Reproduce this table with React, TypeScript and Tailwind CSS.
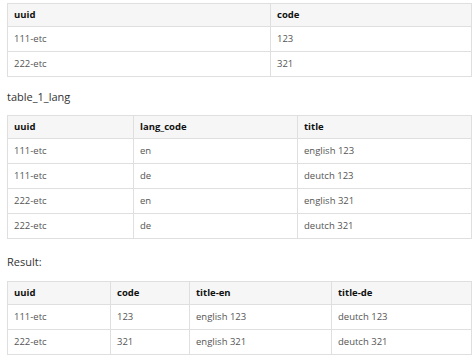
type Table = { cols: { label: string; w: number }[]; rows: string[][] };

const tables: Table[] = [
  {
    cols: [
      { label: "uuid", w: 263 },
      { label: "code", w: 201 },
    ],
    rows: [
      ["111-etc", "123"],
      ["222-etc", "321"],
    ],
  },
  {
    cols: [
      { label: "uuid", w: 126 },
      { label: "lang_code", w: 164 },
      { label: "title", w: 174 },
    ],
    rows: [
      ["111-etc", "en", "english 123"],
      ["111-etc", "de", "deutch 123"],
      ["222-etc", "en", "english 321"],
      ["222-etc", "de", "deutch 321"],
    ],
  },
  {
    cols: [
      { label: "uuid", w: 103 },
      { label: "code", w: 79 },
      { label: "title-en", w: 142 },
      { label: "title-de", w: 140 },
    ],
    rows: [
      ["111-etc", "123", "english 123", "deutch 123"],
      ["222-etc", "321", "english 321", "deutch 321"],
    ],
  },
];

function DataTable({ table }: { table: Table }) {
  return (
    <table className="w-[464px] table-fixed border-collapse border border-[#dfdfdf] text-[9.5px]">
      <colgroup>
        {table.cols.map((c) => (
          <col key={c.label} style={{ width: c.w }} />
        ))}
      </colgroup>
      <thead>
        <tr className="h-[23px] bg-[#f6f6f6]">
          {table.cols.map((c) => (
            <th
              key={c.label}
              className="border border-[#dfdfdf] px-[6px] py-0 text-left font-bold text-[#111]"
            >
              {c.label}
            </th>
          ))}
        </tr>
      </thead>
      <tbody>
        {table.rows.map((r, i) => (
          <tr key={i} className="h-[25px] bg-white">
            {r.map((cell, j) => (
              <td key={j} className="border border-[#dfdfdf] px-[6px] py-0 text-[#555]">
                {cell}
              </td>
            ))}
          </tr>
        ))}
      </tbody>
    </table>
  );
}

export default function App() {
  return (
    <div
      className="min-h-[357px] w-[474px] bg-white px-[7px] pt-[3px] leading-4"
      style={{ fontFamily: '"Open Sans", "Noto Sans", sans-serif' }}
    >
      <DataTable table={tables[0]} />
      <p className="mt-[12px] mb-[10px] text-[11px] text-[#333]">table_1_lang</p>
      <DataTable table={tables[1]} />
      <p className="mt-[15px] mb-[11px] text-[11px] text-[#333]">Result:</p>
      <DataTable table={tables[2]} />
    </div>
  );
}
